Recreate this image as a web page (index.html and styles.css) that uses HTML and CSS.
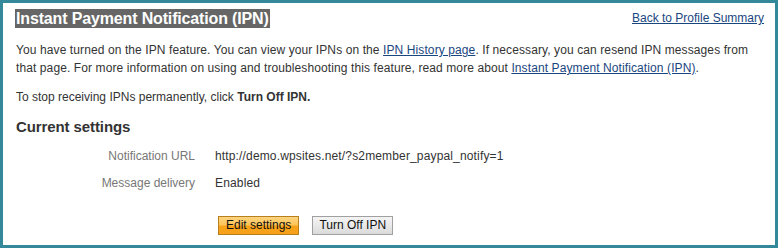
FILE: index.html
```html
<!DOCTYPE html>
<html>
<head>
<meta charset="utf-8">
<link rel="stylesheet" href="styles.css">
</head>
<body>
<div class="frame">
  <div class="top">
    <h1 class="title"><span class="hl">Instant Payment Notification (IPN)</span></h1>
    <a class="back" href="#">Back to Profile Summary</a>
  </div>
  <p class="intro">You have turned on the IPN feature. You can view your IPNs on the <a href="#">IPN History page</a>. If necessary, you can resend IPN messages from that page. For more information on using and troubleshooting this feature, read more about <a href="#">Instant Payment Notification (IPN)</a>.</p>
  <p class="stop">To stop receiving IPNs permanently, click <b>Turn Off IPN.</b></p>
  <h2 class="sub">Current settings</h2>
  <div class="settings">
    <div class="label">Notification URL</div>
    <div class="value">http://demo.wpsites.net/?s2member_paypal_notify=1</div>
    <div class="label">Message delivery</div>
    <div class="value">Enabled</div>
  </div>
  <div class="actions">
    <button class="btn primary">Edit settings</button>
    <button class="btn secondary">Turn Off IPN</button>
  </div>
</div>
</body>
</html>
```
FILE: styles.css
```css
html, body {
  margin: 0;
  padding: 0;
  background: #fff;
}
body {
  font-family: "Liberation Sans", Arial, sans-serif;
  font-size: 12px;
  color: #333;
}
.frame {
  box-sizing: border-box;
  width: 778px;
  height: 248px;
  border: 3px solid #338899;
  padding: 6px 13px 0 13px;
}
.top {
  display: flex;
  justify-content: space-between;
  align-items: flex-start;
}
.title {
  margin: 0;
  font-size: 16px;
  font-weight: bold;
  line-height: 19px;
  letter-spacing: -0.15px;
}
.hl {
  display: inline-block;
  background: #666;
  color: #fff;
  padding: 0 1px 0 1px;
  margin-left: -1px;
}
.back {
  margin-top: 2px;
  margin-right: -2px;
  font-size: 12px;
  color: #1a4680;
  text-decoration: underline;
  line-height: 14px;
}
a {
  color: #1a4680;
}
.intro {
  margin: 13px 0 0 0;
  line-height: 18px;
  max-width: 735px;
  letter-spacing: 0.1px;
}
.stop {
  margin: 11px 0 0 0;
  line-height: 18px;
}
.sub {
  margin: 12px 0 0 0;
  font-size: 15px;
  font-weight: bold;
  line-height: 18px;
  color: #333;
  letter-spacing: -0.1px;
}
.settings {
  display: grid;
  grid-template-columns: 179px auto;
  column-gap: 20px;
  row-gap: 9px;
  margin-top: 11px;
  line-height: 18px;
}
.label {
  text-align: right;
  color: #777;
}
.value {
  letter-spacing: 0.15px;
}
.actions {
  display: flex;
  gap: 13px;
  margin-top: 24px;
  padding-left: 202px;
}
.btn {
  font-family: "Liberation Sans", Arial, sans-serif;
  font-size: 12px;
  color: #111;
  height: 19px;
  padding: 0 7px;
  line-height: 17px;
  border-radius: 0;
  cursor: pointer;
}
.primary {
  background: linear-gradient(to bottom, #ffd47f 0%, #ffc55a 45%, #f9a31a 55%, #f7a11b 100%);
  border: 1px solid #b8801d;
}
.secondary {
  background: linear-gradient(to bottom, #f4f4f4 0%, #e9e9e9 50%, #dadada 100%);
  border: 1px solid #a0a0a0;
  padding: 0 6px;
}
```
